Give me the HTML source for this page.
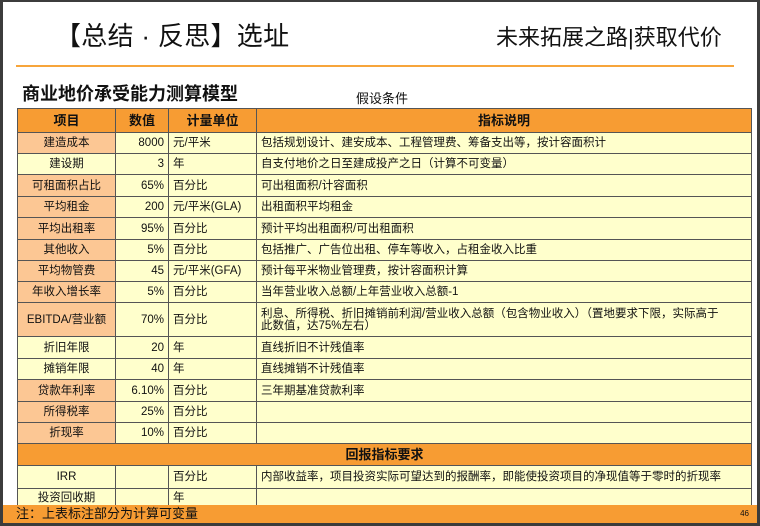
<!DOCTYPE html>
<html><head><meta charset="utf-8"><style>
*{margin:0;padding:0;box-sizing:border-box}
body{width:760px;height:526px;background:#3c3c3c;position:relative;overflow:hidden;font-family:"Liberation Sans","Noto Sans CJK SC",sans-serif;color:#111}
#pg{position:absolute;left:3px;top:2px;width:754px;height:521px;background:#fff}
.t1{position:absolute;left:52px;top:18px;font-size:26px;letter-spacing:0.3px;line-height:32px}
.t2{position:absolute;left:493px;top:20px;font-size:22px;line-height:32px}
.line{position:absolute;left:13px;top:63px;width:718px;height:2px;background:#f7a53b}
.sub{position:absolute;left:19px;top:80px;font-size:18px;font-weight:bold;line-height:24px}
.jz{position:absolute;left:353px;top:88px;font-size:13px;line-height:18px}
table{position:absolute;left:14px;top:106px;border-collapse:collapse;width:735px;font-size:11.5px;table-layout:fixed}
td{border:1px solid #555;background:#ffffcc;padding:0 4px;line-height:12px;overflow:hidden}
tr{height:21px}
.h td{background:#f79c33;font-weight:bold;font-size:13px;text-align:center}
td.p{background:#fcc794;text-align:center}
td.y{text-align:center}
td.n{text-align:right}
.foot{position:absolute;left:0;top:503px;width:754px;height:18px;background:#f79c33}
.foot span{position:absolute;left:13px;top:1px;font-size:13px;line-height:16px}
.foot i{position:absolute;right:8px;top:4px;font-size:8px;font-style:normal}
</style></head><body><div id="pg">
<div class="t1">【总结 · 反思】选址</div>
<div class="t2">未来拓展之路|获取代价</div>
<div class="line"></div>
<div class="sub">商业地价承受能力测算模型</div>
<div class="jz">假设条件</div>
<table>
<colgroup><col style="width:98px"><col style="width:53px"><col style="width:88px"><col></colgroup>
<tr class="h" style="height:24px"><td>项目</td><td>数值</td><td>计量单位</td><td>指标说明</td></tr>
<tr><td class="p">建造成本</td><td class="n">8000</td><td>元/平米</td><td>包括规划设计、建安成本、工程管理费、筹备支出等，按计容面积计</td></tr>
<tr><td class="y">建设期</td><td class="n">3</td><td>年</td><td>自支付地价之日至建成投产之日（计算不可变量）</td></tr>
<tr style="height:22px"><td class="p">可租面积占比</td><td class="n">65%</td><td>百分比</td><td>可出租面积/计容面积</td></tr>
<tr><td class="p">平均租金</td><td class="n">200</td><td>元/平米(GLA)</td><td>出租面积平均租金</td></tr>
<tr style="height:22px"><td class="p">平均出租率</td><td class="n">95%</td><td>百分比</td><td>预计平均出租面积/可出租面积</td></tr>
<tr><td class="p">其他收入</td><td class="n">5%</td><td>百分比</td><td>包括推广、广告位出租、停车等收入，占租金收入比重</td></tr>
<tr><td class="p">平均物管费</td><td class="n">45</td><td>元/平米(GFA)</td><td>预计每平米物业管理费，按计容面积计算</td></tr>
<tr><td class="p">年收入增长率</td><td class="n">5%</td><td>百分比</td><td>当年营业收入总额/上年营业收入总额-1</td></tr>
<tr style="height:34px"><td class="p">EBITDA/营业额</td><td class="n">70%</td><td>百分比</td><td>利息、所得税、折旧摊销前利润/营业收入总额（包含物业收入）（置地要求下限，实际高于<br>此数值，达75%左右）</td></tr>
<tr style="height:22px"><td class="y">折旧年限</td><td class="n">20</td><td>年</td><td>直线折旧不计残值率</td></tr>
<tr><td class="y">摊销年限</td><td class="n">40</td><td>年</td><td>直线摊销不计残值率</td></tr>
<tr style="height:22px"><td class="p">贷款年利率</td><td class="n">6.10%</td><td>百分比</td><td>三年期基准贷款利率</td></tr>
<tr><td class="p">所得税率</td><td class="n">25%</td><td>百分比</td><td></td></tr>
<tr><td class="p">折现率</td><td class="n">10%</td><td>百分比</td><td></td></tr>
<tr class="h" style="height:22px"><td colspan="4">回报指标要求</td></tr>
<tr style="height:23px"><td class="y">IRR</td><td></td><td>百分比</td><td>内部收益率，项目投资实际可望达到的报酬率，即能使投资项目的净现值等于零时的折现率</td></tr>
<tr style="height:19.5px"><td class="y">投资回收期</td><td></td><td>年</td><td></td></tr>
</table>
<div class="foot"><span>注：上表标注部分为计算可变量</span><i>46</i></div>
</div></body></html>
